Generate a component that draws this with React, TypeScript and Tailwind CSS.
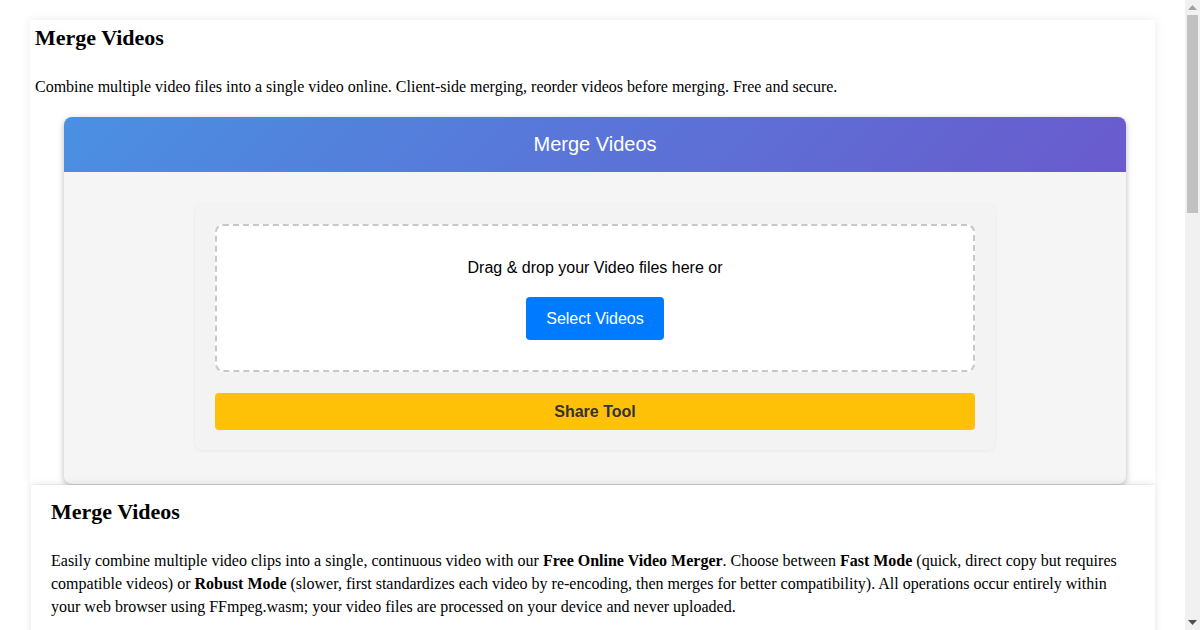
const serif = "font-['Liberation_Serif','Times_New_Roman',serif]";
const sans = "font-['Liberation_Sans',Arial,sans-serif]";

// the reference shows a classic browser scrollbar, drawn here as a plain column
const ScrollBar = () => {
  return (
    <div className="w-[15px] h-screen shrink-0 bg-[#f1f1f1] flex flex-col items-center">
      <div className="h-[15px] flex items-center justify-center">
        <svg width="9" height="5" viewBox="0 0 9 5">
          <polygon points="4.5,0 9,5 0,5" fill="#a3a3a3" />
        </svg>
      </div>
      <div className="w-[11px] h-[198px] bg-[#c1c1c1]" />
      <div className="flex-1" />
      <div className="h-[15px] flex items-center justify-center">
        <svg width="9" height="5" viewBox="0 0 9 5">
          <polygon points="0,0 9,0 4.5,5" fill="#505050" />
        </svg>
      </div>
    </div>
  );
};

const ToolCard = () => {
  return (
    <div className="ml-[29px] mr-[24px] rounded-lg overflow-hidden bg-[#f5f5f5] shadow-[0_2px_6px_rgba(0,0,0,0.28)]">
      <div
        className={`h-[55px] pb-[2px] flex items-center justify-center text-white text-[20px] bg-[linear-gradient(135deg,#4a90e2,#6a5acd)] ${sans}`}
      >
        Merge Videos
      </div>
      <div className="pt-[32px] pb-[34px] flex justify-center">
        <div className="w-[800px] bg-[#f3f3f3] rounded-lg p-[20px] shadow-[0_1px_4px_rgba(0,0,0,0.06)]">
          <div className="bg-white border-2 border-dashed border-[#c8c8c8] rounded-lg pt-[31px] pb-[30px] flex flex-col items-center">
            <p className={`text-[16px] leading-[22px] text-black ${sans}`}>
              Drag &amp; drop your Video files here or
            </p>
            <button
              className={`mt-[18px] h-[43px] px-[20px] rounded bg-[#007bff] text-white text-[16px] ${sans}`}
            >
              Select Videos
            </button>
          </div>
          <button
            className={`mt-[21px] w-full h-[37px] rounded bg-[#ffc107] text-[#333] font-bold text-[16px] ${sans}`}
          >
            Share Tool
          </button>
        </div>
      </div>
    </div>
  );
};

const App = () => {
  return (
    <div className={`flex h-screen overflow-hidden bg-white ${serif} text-black`}>
      <main className="w-[1185px] shrink-0">
        <div className="w-[1125px] mx-auto mt-[20px] bg-white px-[5px] pt-[5px] shadow-[0_0_10px_rgba(0,0,0,0.08)]">
          <h1 className="text-[22px] leading-[25px] font-bold">Merge Videos</h1>
          <p className="mt-[28px] text-[16px] leading-[18px]">
            Combine multiple video files into a single video online. Client-side
            merging, reorder videos before merging. Free and secure.
          </p>
          <div className="mt-[21px]">
            <ToolCard />
          </div>
        </div>
        <section className="w-[1124px] ml-[31px] mt-[1px] bg-white px-[20px] pt-[14px] pb-[30px] shadow-[0_0_8px_rgba(0,0,0,0.12)]">
          <h2 className="text-[22px] leading-[25px] font-bold">Merge Videos</h2>
          <p className="mt-[25px] text-[16px] leading-[23px]">
            Easily combine multiple video clips into a single, continuous video
            with our <strong>Free Online Video Merger</strong>. Choose between{" "}
            <strong>Fast Mode</strong> (quick, direct copy but requires
            compatible videos) or <strong>Robust Mode</strong> (slower, first
            standardizes each video by re-encoding, then merges for better
            compatibility). All operations occur entirely within your web
            browser using FFmpeg.wasm; your video files are processed on your
            device and never uploaded.
          </p>
          <h3 className="mt-[24px] text-[19px] font-bold">How to Merge Videos</h3>
          <ol className="mt-[12px] list-decimal pl-[40px] text-[16px] leading-[23px]">
            <li>Drag and drop your video files or click "Select Videos".</li>
            <li>Reorder the clips in the list to set the playback order.</li>
            <li>Choose Fast Mode or Robust Mode.</li>
            <li>Click "Merge Videos" and wait for processing to finish.</li>
          </ol>
        </section>
      </main>
      <ScrollBar />
    </div>
  );
};

export default App;
